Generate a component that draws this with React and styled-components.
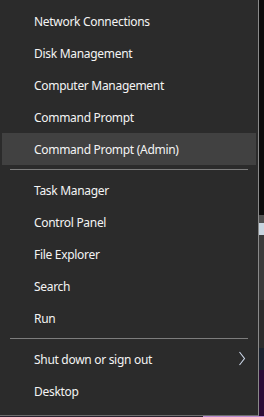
import React from 'react'
import styled, { createGlobalStyle } from 'styled-components'

const GlobalStyle = createGlobalStyle`
  html, body {
    margin: 0;
    padding: 0;
    background: #0c0c0c;
  }
`

const items = [
  { label: 'Network Connections' },
  { label: 'Disk Management' },
  { label: 'Computer Management' },
  { label: 'Command Prompt' },
  { label: 'Command Prompt (Admin)', active: true },
  { sep: true },
  { label: 'Task Manager' },
  { label: 'Control Panel' },
  { label: 'File Explorer' },
  { label: 'Search' },
  { label: 'Run' },
  { sep: true },
  { label: 'Shut down or sign out', more: true },
  { label: 'Desktop' },
]

// what peeks out from behind the menu on the right
const backdrop = [
  { h: 215, c: '#0c0c0c' },
  { h: 8, c: '#505050' },
  { h: 12, c: '#c9d5e0' },
  { h: 65, c: '#3a3a3a' },
  { h: 48, c: '#2c2c2c' },
  { h: 22, c: '#1c2430' },
  { h: 46, c: '#2a0c36' },
]

const Page = styled.div`
  width: 264px;
  height: 417px;
  display: flex;
  flex-direction: column;
  overflow: hidden;
`

const Top = styled.div`
  display: flex;
  height: 416px;
`

const Menu = styled.div`
  width: 259px;
  height: 416px;
  box-sizing: border-box;
  background: #2b2b2b;
  border-right: 1px solid #8a8a8a;
  border-bottom: 1px solid #6e6e6e;
  padding-top: 5px;
  font-family: "Noto Sans", "Open Sans", sans-serif;
  font-size: 12px;
  letter-spacing: -0.3px;
  color: #f4f4f4;
`

const Row = styled.div`
  height: 32px;
  margin: 0 2px;
  padding: 0 10px 0 32px;
  display: flex;
  align-items: center;
  justify-content: space-between;
  background: ${p => (p.$active ? '#414141' : 'transparent')};
  white-space: nowrap;
`

const Sep = styled.div`
  height: 9px;
  display: flex;
  align-items: center;
  padding: 0 10px;
  &::after {
    content: '';
    flex: 1;
    height: 1px;
    background: #7d7d7d;
  }
`

const Backdrop = styled.div`
  flex: 1;
  display: flex;
  flex-direction: column;
`

const Band = styled.div`
  flex: none;
  height: ${p => p.$h}px;
  background: ${p => p.$c};
`

const Bottom = styled.div`
  height: 1px;
  display: flex;
`

const BottomPart = styled.div`
  background: ${p => p.$c};
  width: ${p => p.$w};
  flex: ${p => (p.$w ? 'none' : 1)};
`

const Chevron = () => (
  <svg width="8" height="16" viewBox="0 0 8 16">
    <polyline points="1.5,1 6.5,7.5 1.5,14" fill="none" stroke="#cdd8ea" strokeWidth="1.1" />
  </svg>
)

export default function App() {
  return (
    <Page>
      <GlobalStyle />
      <Top>
        <Menu>
          {items.map((it, i) =>
            it.sep ? (
              <Sep key={i} />
            ) : (
              <Row key={i} $active={it.active}>
                <span>{it.label}</span>
                {it.more && <Chevron />}
              </Row>
            )
          )}
        </Menu>
        <Backdrop>
          {backdrop.map((b, i) => (
            <Band key={i} $h={b.h} $c={b.c} />
          ))}
        </Backdrop>
      </Top>
      <Bottom>
        <BottomPart $w="203px" $c="#2a2230" />
        <BottomPart $c="#b98ad0" />
      </Bottom>
    </Page>
  )
}
